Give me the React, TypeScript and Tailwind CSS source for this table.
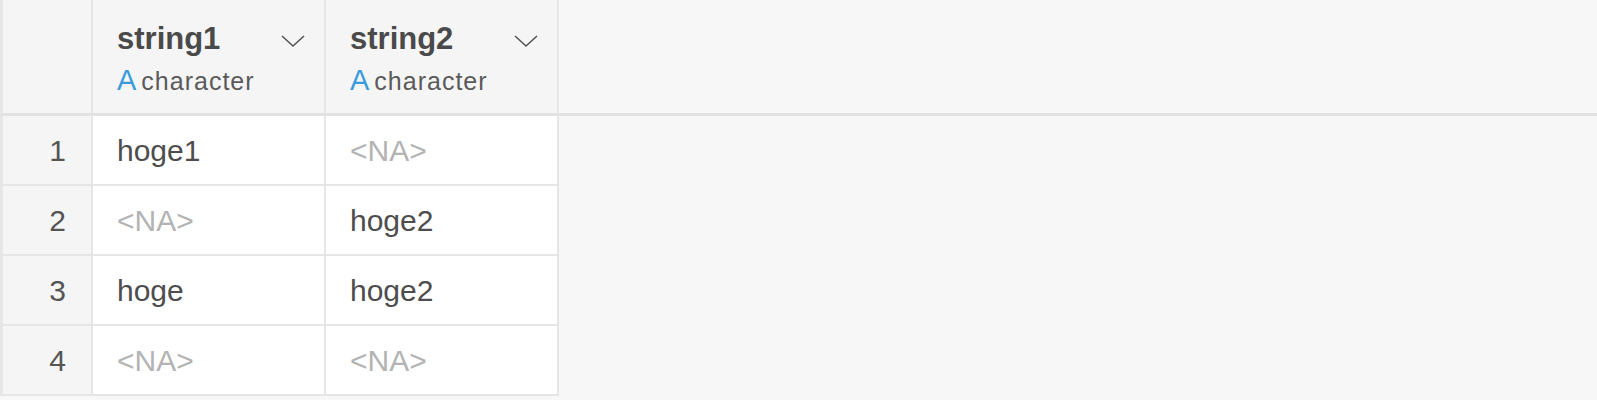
import React from 'react';

interface Column {
  name: string;
  type: string;
}

const columns: Column[] = [
  { name: 'string1', type: 'character' },
  { name: 'string2', type: 'character' },
];

// null = NA
const rows: (string | null)[][] = [
  ['hoge1', null],
  [null, 'hoge2'],
  ['hoge', 'hoge2'],
  [null, null],
];

const Chevron: React.FC = () => (
  <svg width="26" height="16" viewBox="0 0 26 16" className="shrink-0 mt-[4px]">
    <polyline points="2,3 13,13 24,3" fill="none" stroke="#555" strokeWidth="1.6" />
  </svg>
);

const App: React.FC = () => {
  return (
    <div className="w-full h-[400px] overflow-hidden bg-[#f7f7f7] font-['Liberation_Sans',Arial,sans-serif]">
      {/* cabecera */}
      <div className="flex h-[116px] border-b-[3px] border-[#e2e2e2]">
        <div className="w-[93px] shrink-0 border-l-[3px] border-r-2 border-[#e6e6e6] bg-[#f5f5f5]" />
        {columns.map((col) => (
          <div
            key={col.name}
            className="w-[233px] shrink-0 border-r-2 border-[#e6e6e6] bg-[#f5f5f5] pl-[24px] pr-[18px] pt-[21px]"
          >
            <div className="flex items-center justify-between">
              <span className="text-[31px] leading-[36px] font-bold text-[#4a4a4a]">{col.name}</span>
              <Chevron />
            </div>
            <div className="flex items-baseline mt-[8px]">
              <span className="text-[29px] leading-[30px] font-light text-[#3a9bdc] mr-[5px]">A</span>
              <span className="text-[25px] leading-[30px] tracking-[1px] text-[#5a5a5a]">{col.type}</span>
            </div>
          </div>
        ))}
      </div>

      {/* filas */}
      {rows.map((row, i) => (
        <div key={i} className="flex">
          <div className="w-[93px] h-[70px] shrink-0 border-l-[3px] border-r-2 border-b-2 border-[#e6e6e6] bg-[#f5f5f5] flex items-center justify-end pr-[25px] text-[30px] text-[#555]">
            {i + 1}
          </div>
          {row.map((cell, j) => (
            <div
              key={j}
              className="w-[233px] h-[70px] shrink-0 border-r-2 border-b-2 border-[#e6e6e6] bg-white flex items-center pl-[24px] text-[30px]"
            >
              {cell === null ? (
                <span className="text-[#b3b3b3]">&lt;NA&gt;</span>
              ) : (
                <span className="text-[#4d4d4d]">{cell}</span>
              )}
            </div>
          ))}
        </div>
      ))}
    </div>
  );
};

export default App;
